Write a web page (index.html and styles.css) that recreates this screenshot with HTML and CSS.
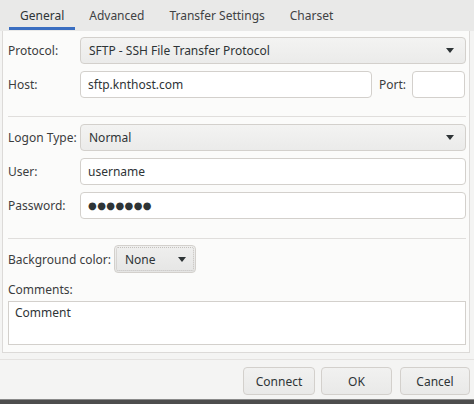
FILE: index.html
```html
<!DOCTYPE html>
<html>
<head>
<meta charset="utf-8">
<link rel="stylesheet" href="styles.css">
</head>
<body>
<div class="dialog">
  <div class="tabs">
    <div class="tab active">General</div>
    <div class="tab">Advanced</div>
    <div class="tab">Transfer Settings</div>
    <div class="tab">Charset</div>
  </div>
  <div class="panel">
    <div class="row">
      <div class="label">Protocol:</div>
      <div class="combo grow"><span>SFTP - SSH File Transfer Protocol</span><span class="arrow"></span></div>
    </div>
    <div class="row">
      <div class="label">Host:</div>
      <div class="entry host">sftp.knthost.com</div>
      <div class="port-label">Port:</div>
      <div class="entry port"></div>
    </div>
    <div class="sep sep1"></div>
    <div class="row">
      <div class="label">Logon Type:</div>
      <div class="combo grow"><span>Normal</span><span class="arrow"></span></div>
    </div>
    <div class="row">
      <div class="label">User:</div>
      <div class="entry grow">username</div>
    </div>
    <div class="row">
      <div class="label">Password:</div>
      <div class="entry grow"><span class="dots">●●●●●●●</span></div>
    </div>
    <div class="sep sep2"></div>
    <div class="row bg-row">
      <div class="label bg-label">Background color:</div>
      <div class="color-btn"><span>None</span><span class="arrow"></span></div>
    </div>
    <div class="comments-label">Comments:</div>
    <div class="textarea">Comment</div>
  </div>
  <div class="buttons">
    <div class="btn connect">Connect</div>
    <div class="btn ok">OK</div>
    <div class="btn cancel">Cancel</div>
  </div>
  <div class="taskbar"></div>
</div>
</body>
</html>
```
FILE: styles.css
```css
html, body {
  margin: 0;
  padding: 0;
  width: 474px;
  height: 404px;
  overflow: hidden;
  background: #f4f4f3;
}
.dialog {
  font-family: "Noto Sans", "Open Sans", sans-serif;
  font-size: 12px;
  color: #2e3436;
  display: flex;
  flex-direction: column;
  height: 404px;
}
.tabs {
  height: 31px;
  background: #e9e9e8;
  display: flex;
  align-items: stretch;
  padding-left: 9px;
  box-sizing: border-box;
}
.tab {
  padding: 0 11px 1px;
  margin-right: 3px;
  display: flex;
  align-items: center;
  color: #3f4244;
  position: relative;
}
.tab.active {
  color: #2e3436;
}
.tab.active::after {
  content: "";
  position: absolute;
  left: 0;
  right: 0;
  bottom: 1px;
  height: 3px;
  background: #3a6ec1;
}
.panel {
  margin: 0 4px 0 2px;
  border: 1px solid #dcdad8;
  border-top: none;
  background: #fbfbfa;
  padding: 6px 3px 6px 5px;
  height: 322px;
  box-sizing: border-box;
  display: flex;
  flex-direction: column;
}
.row {
  display: flex;
  align-items: center;
  height: 27px;
  margin-bottom: 7px;
}
.label {
  width: 72px;
  flex: none;
  color: #3b3d3e;
  white-space: nowrap;
}
.grow {
  flex: 1;
}
.combo, .entry, .color-btn, .textarea, .btn {
  box-sizing: border-box;
  border: 1px solid #d3d0cc;
  border-radius: 4px;
}
.combo {
  height: 27px;
  display: flex;
  align-items: center;
  justify-content: space-between;
  padding: 0 11px 0 8px;
  background: linear-gradient(#f3f3f2, #ebebea);
}
.entry {
  height: 27px;
  display: flex;
  align-items: center;
  padding: 0 7px;
  background: #ffffff;
}
.arrow {
  width: 0;
  height: 0;
  border-left: 4px solid transparent;
  border-right: 4px solid transparent;
  border-top: 5px solid #2e3436;
}
.host {
  width: 292px;
}
.port-label {
  margin-left: 7px;
  width: 33px;
  color: #3b3d3e;
}
.port {
  width: 53px;
}
.sep {
  height: 1px;
  background: #e0dedc;
}
.sep1 {
  margin-top: 11px;
  margin-bottom: 7px;
}
.sep2 {
  margin-top: 12px;
  margin-bottom: 6px;
}
.bg-row {
  height: 28px;
  margin-bottom: 0;
}
.bg-label {
  width: auto;
  margin-right: 3px;
}
.color-btn {
  width: 82px;
  height: 28px;
  display: flex;
  align-items: center;
  justify-content: space-between;
  padding: 0 9px 0 10px;
  background: linear-gradient(#efefee, #e6e6e5);
  outline: 1px dotted #c3c0bc;
  outline-offset: -3px;
}
.comments-label {
  margin-top: 7px;
  height: 20px;
  line-height: 20px;
  color: #3b3d3e;
}
.textarea {
  margin-top: 1px;
  height: 44px;
  background: #ffffff;
  padding: 2px 6px;
  border-radius: 0;
}
.dots {
  font-family: "DejaVu Sans", sans-serif;
  font-size: 10px;
  letter-spacing: 0.4px;
}
.buttons {
  flex: 1;
  display: flex;
  justify-content: flex-end;
  align-items: flex-start;
  padding: 7px 4px 0 0;
  border-top: 1px solid #e4e2e0;
  margin-top: 6px;
  gap: 6px;
}
.btn {
  height: 28px;
  display: flex;
  align-items: center;
  justify-content: center;
  background: linear-gradient(#f1f1f0, #e9e9e8);
  color: #2e3436;
}
.connect { width: 72px; }
.ok { width: 71px; margin-right: 2px; }
.cancel { width: 70px; }
.taskbar {
  height: 4px;
  background: #4d4d4d;
  border-top: 1px solid #8a8a8a;
}
```
